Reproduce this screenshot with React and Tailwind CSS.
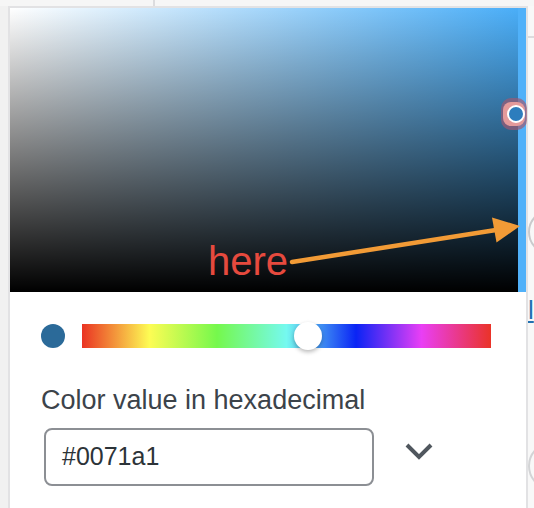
import React from 'react'

const font = "font-['Liberation_Sans',Arial,sans-serif]"

function Annotation() {
  // arrow drawn on top of the gradient, coordinates relative to the gradient row
  return (
    <svg className="absolute left-0 top-0" width="516" height="284" viewBox="0 0 516 284">
      <line x1="282" y1="254" x2="486" y2="222" stroke="#f29b36" strokeWidth="4.5" strokeLinecap="round" />
      <polygon points="510,218 486.5,234.5 482,209.5" fill="#f29b36" />
    </svg>
  )
}

function Marker() {
  return (
    <div className="absolute left-[491px] top-[90px] w-[26px] h-[32px] rounded-[10px] bg-[#9b5a73]/70 flex items-center justify-center">
      <div className="w-[22px] h-[24px] rounded-[8px] bg-[#e49a9b] flex items-center justify-end">
        <div className="w-[18px] h-[18px] rounded-full bg-[#2d7dbd] border-[2.5px] border-white" />
      </div>
    </div>
  )
}

function HueSlider() {
  return (
    <div className="relative flex-1 h-[24px] bg-[linear-gradient(to_right,#ea3323,#fdfc54_16.5%,#75f84c_33%,#75f9f0_50%,#0a24f5_67%,#e93ff5_83%,#ea3328)]">
      <div className="absolute left-[212px] top-[-2px] w-[28px] h-[28px] rounded-full bg-white shadow-[0_2px_4px_rgba(0,0,0,0.28)]" />
    </div>
  )
}

function Chevron() {
  return (
    <svg className="mt-[14px] ml-[30px]" width="30" height="18" viewBox="0 0 30 18">
      <polyline points="3,3 15,15 27,3" fill="none" stroke="#50575e" strokeWidth="4" />
    </svg>
  )
}

export default function App() {
  return (
    <div className={`w-[534px] h-[508px] overflow-hidden bg-[#f6f6f6] flex flex-col ${font}`}>
      {/* page behind the popover */}
      <div className="h-[6px] shrink-0 flex">
        <div className="w-[155px] h-full border-r-2 border-[#dcdcde]" />
      </div>
      <div className="flex flex-1 min-h-0">
        <div className="w-[8px] shrink-0 bg-[#f1f1f1]" />

        {/* popover card */}
        <div className="w-[520px] shrink-0 bg-white border-x-2 border-t-2 border-[#e2e2e4] flex flex-col">
          <div className="relative flex h-[284px] shrink-0">
            <div className="flex-1 bg-[linear-gradient(to_top,#000,rgba(0,0,0,0)),linear-gradient(to_right,#ffffff,#4aaef8)]" />
            <div className="w-[8px] bg-[#50b1f9]" />
            <span className="absolute left-[198px] top-[233px] text-[40px] leading-[40px] text-[#e64a3e]">here</span>
            <Annotation />
            <Marker />
          </div>

          <div className="pl-[31px] pr-[35px]">
            <div className="mt-[32px] flex items-center gap-[17px]">
              <div className="w-[24px] h-[24px] rounded-full bg-[#2b6a99] shrink-0" />
              <HueSlider />
            </div>
            <div className="mt-[36px] text-[27px] leading-[32px] text-[#3c434a]">Color value in hexadecimal</div>
            <div className="mt-[12px] flex items-start">
              <div className="ml-[3px] w-[330px] h-[58px] rounded-[8px] border-2 border-[#8c8f94] pl-[16px] flex items-center text-[25px] text-[#2c3338]">
                #0071a1
              </div>
              <Chevron />
            </div>
          </div>
        </div>

        {/* right edge of the page */}
        <div className="flex-1 overflow-hidden flex flex-col bg-[#f8f8f8]">
          <div className="mt-[30px] border-t-2 border-[#dcdcde]" />
          <div className="mt-[171px] w-[46px] h-[46px] shrink-0 rounded-full border-2 border-[#c9cacc]" />
          <div className="mt-[40px] text-[26px] leading-[30px] text-[#2271b1] underline whitespace-nowrap">l</div>
          <div className="mt-[117px] w-[48px] h-[48px] shrink-0 rounded-full border-2 border-[#d3d4d6]" />
        </div>
      </div>
    </div>
  )
}
